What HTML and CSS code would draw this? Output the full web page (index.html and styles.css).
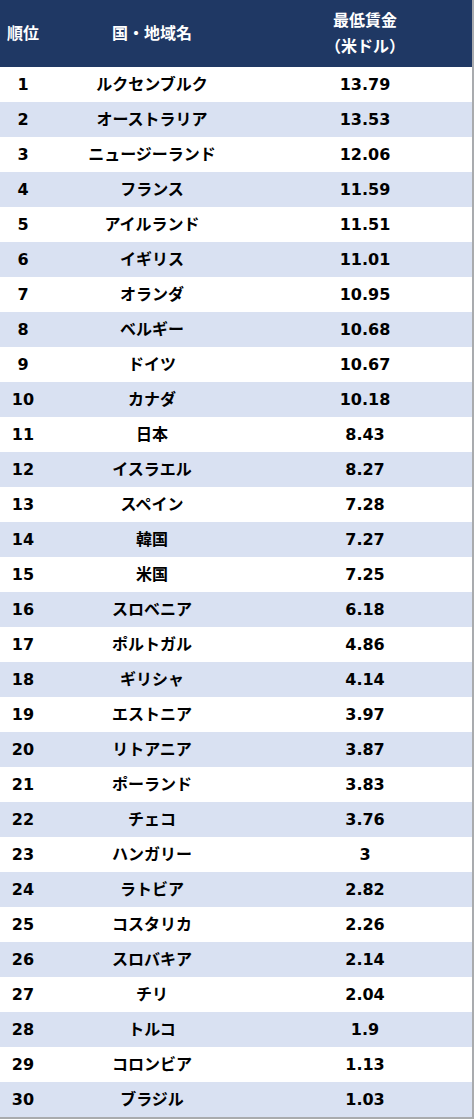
FILE: index.html
```html
<!DOCTYPE html>
<html lang="ja">
<head>
<meta charset="utf-8">
<title>最低賃金</title>
<link rel="stylesheet" href="styles.css">
</head>
<body>
<div class="frame">
<table class="wage">
<thead>
<tr><th class="c-rank">順位</th><th class="c-name">国・地域名</th><th class="c-val">最低賃金<br>（米ドル）</th></tr>
</thead>
<tbody>
<tr><td>1</td><td>ルクセンブルク</td><td>13.79</td></tr>
<tr><td>2</td><td>オーストラリア</td><td>13.53</td></tr>
<tr><td>3</td><td>ニュージーランド</td><td>12.06</td></tr>
<tr><td>4</td><td>フランス</td><td>11.59</td></tr>
<tr><td>5</td><td>アイルランド</td><td>11.51</td></tr>
<tr><td>6</td><td>イギリス</td><td>11.01</td></tr>
<tr><td>7</td><td>オランダ</td><td>10.95</td></tr>
<tr><td>8</td><td>ベルギー</td><td>10.68</td></tr>
<tr><td>9</td><td>ドイツ</td><td>10.67</td></tr>
<tr><td>10</td><td>カナダ</td><td>10.18</td></tr>
<tr><td>11</td><td>日本</td><td>8.43</td></tr>
<tr><td>12</td><td>イスラエル</td><td>8.27</td></tr>
<tr><td>13</td><td>スペイン</td><td>7.28</td></tr>
<tr><td>14</td><td>韓国</td><td>7.27</td></tr>
<tr><td>15</td><td>米国</td><td>7.25</td></tr>
<tr><td>16</td><td>スロベニア</td><td>6.18</td></tr>
<tr><td>17</td><td>ポルトガル</td><td>4.86</td></tr>
<tr><td>18</td><td>ギリシャ</td><td>4.14</td></tr>
<tr><td>19</td><td>エストニア</td><td>3.97</td></tr>
<tr><td>20</td><td>リトアニア</td><td>3.87</td></tr>
<tr><td>21</td><td>ポーランド</td><td>3.83</td></tr>
<tr><td>22</td><td>チェコ</td><td>3.76</td></tr>
<tr><td>23</td><td>ハンガリー</td><td>3</td></tr>
<tr><td>24</td><td>ラトビア</td><td>2.82</td></tr>
<tr><td>25</td><td>コスタリカ</td><td>2.26</td></tr>
<tr><td>26</td><td>スロバキア</td><td>2.14</td></tr>
<tr><td>27</td><td>チリ</td><td>2.04</td></tr>
<tr><td>28</td><td>トルコ</td><td>1.9</td></tr>
<tr><td>29</td><td>コロンビア</td><td>1.13</td></tr>
<tr><td>30</td><td>ブラジル</td><td>1.03</td></tr>
</tbody>
</table>
</div>
</body>
</html>
```
FILE: styles.css
```css
html, body {
  margin: 0;
  padding: 0;
  background: #ffffff;
}
.frame {
  width: 472px;
  border-right: 2px solid #a9abae;
  border-bottom: 2px solid #a9abae;
}
.wage {
  width: 472px;
  border-collapse: collapse;
  table-layout: fixed;
  font-family: "DejaVu Sans", "Noto Sans CJK JP", sans-serif;
  font-weight: 700;
  font-size: 16px;
  color: #000;
}
.wage th {
  background: #1f3864;
  color: #ffffff;
  height: 67px;
  padding: 0;
  line-height: 26px;
  font-weight: 700;
  text-align: center;
  vertical-align: middle;
}
.c-rank { width: 46px; }
.c-name { width: 212px; }
.c-val { width: 214px; }
.wage td {
  height: 35px;
  padding: 0;
  text-align: center;
  vertical-align: middle;
  line-height: 20px;
}
.wage tbody tr:nth-child(even) td {
  background: #d9e1f2;
}
```
